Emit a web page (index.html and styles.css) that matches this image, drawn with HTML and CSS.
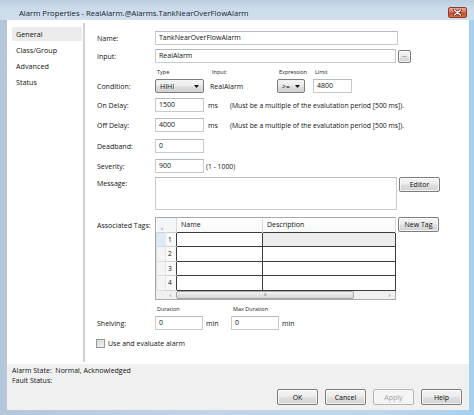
FILE: index.html
```html
<!DOCTYPE html>
<html>
<head>
<meta charset="utf-8">
<title>Alarm Properties</title>
<link rel="stylesheet" href="styles.css">
</head>
<body>
<div class="window">
  <div class="titlebar">
    <span class="title">Alarm Properties - RealAlarm.@Alarms.TankNearOverFlowAlarm</span>
    <span class="close">
      <svg width="9" height="7" viewBox="0 0 9 7">
        <path d="M1.5 1 L7.5 6 M7.5 1 L1.5 6" stroke="#5a1a10" stroke-width="2.6" stroke-linecap="round"/>
        <path d="M1.5 1 L7.5 6 M7.5 1 L1.5 6" stroke="#ffffff" stroke-width="1.4" stroke-linecap="round"/>
      </svg>
    </span>
  </div>

  <div class="client">
    <div class="content">
      <ul class="nav">
        <li class="active">General</li>
        <li>Class/Group</li>
        <li>Advanced</li>
        <li>Status</li>
      </ul>

      <div class="form">
        <div class="row">
          <span class="lbl">Name:</span>
          <div class="box name-box">TankNearOverFlowAlarm</div>
        </div>

        <div class="row row-input">
          <span class="lbl">Input:</span>
          <div class="box input-box">RealAlarm</div>
          <button class="btn browse">...</button>
        </div>

        <div class="row-condition">
          <span class="lbl cond-lbl">Condition:</span>
          <div class="cond-grid">
            <span class="cap">Type</span>
            <span class="cap">Input:</span>
            <span class="cap">Expression</span>
            <span class="cap">Limit</span>
            <div class="combo type-combo"><span>HIHI</span><svg width="5" height="3" viewBox="0 0 5 3"><path d="M0 0 H5 L2.5 3 Z" fill="#111"/></svg></div>
            <span class="plain">RealAlarm</span>
            <div class="combo expr-combo"><span>&gt;=</span><svg width="5" height="3" viewBox="0 0 5 3"><path d="M0 0 H5 L2.5 3 Z" fill="#111"/></svg></div>
            <div class="box limit-box">4800</div>
          </div>
        </div>

        <div class="row row-on">
          <span class="lbl">On Delay:</span>
          <div class="box short">1500</div>
          <span class="unit">ms</span>
          <span class="note">(Must be a multiple of the evalutation period [500 ms]).</span>
        </div>

        <div class="row row-off">
          <span class="lbl">Off Delay:</span>
          <div class="box short">4000</div>
          <span class="unit">ms</span>
          <span class="note">(Must be a multiple of the evalutation period [500 ms]).</span>
        </div>

        <div class="row row-dead">
          <span class="lbl">Deadband:</span>
          <div class="box short">0</div>
        </div>

        <div class="row row-sev">
          <span class="lbl">Severity:</span>
          <div class="box short">900</div>
          <span class="range">(1 - 1000)</span>
        </div>

        <div class="row-top row-msg">
          <span class="lbl msg-lbl">Message:</span>
          <div class="box message"></div>
          <button class="btn side-btn">Editor</button>
        </div>

        <div class="row-top row-tags">
          <span class="lbl tags-lbl">Associated Tags:</span>
          <div class="tags">
            <table class="tag-table">
              <colgroup>
                <col class="c-sel"><col class="c-num"><col class="c-name"><col class="c-desc">
              </colgroup>
              <thead>
                <tr>
                  <th class="corner" colspan="2"><span class="tri"></span></th>
                  <th>Name</th>
                  <th>Description</th>
                </tr>
              </thead>
              <tbody>
                <tr class="current"><td class="sel"></td><td class="num">1</td><td></td><td class="shade"></td></tr>
                <tr><td class="sel"></td><td class="num">2</td><td></td><td></td></tr>
                <tr><td class="sel"></td><td class="num">3</td><td></td><td></td></tr>
                <tr><td class="sel"></td><td class="num">4</td><td></td><td></td></tr>
              </tbody>
            </table>
            <div class="hscroll">
              <span class="arrow">&#8249;</span>
              <div class="track">
                <div class="thumb"><span class="grip">III</span></div>
              </div>
              <span class="arrow">&#8250;</span>
            </div>
          </div>
          <button class="btn side-btn">New Tag</button>
        </div>

        <div class="shelving">
          <span class="lbl shelf-lbl">Shelving:</span>
          <div class="shelf-grid">
            <span class="cap">Duration</span>
            <span></span>
            <span class="cap">Max Duration</span>
            <span></span>
            <div class="box shelf-box">0</div>
            <span class="unit">min</span>
            <div class="box shelf-box">0</div>
            <span class="unit">min</span>
          </div>
        </div>

        <label class="check-row">
          <span class="check"></span>
          <span>Use and evaluate alarm</span>
        </label>
      </div>
    </div>

    <div class="footer">
      <div class="status">Alarm State:&nbsp; Normal, Acknowledged</div>
      <div class="status">Fault Status:</div>
      <div class="actions">
        <button class="btn">OK</button>
        <button class="btn">Cancel</button>
        <button class="btn" disabled>Apply</button>
        <button class="btn">Help</button>
      </div>
    </div>
  </div>
</div>
</body>
</html>
```

FILE: styles.css
```css
* {
  box-sizing: border-box;
}

html, body {
  margin: 0;
  padding: 0;
}

body {
  width: 474px;
  height: 415px;
  overflow: hidden;
  font-family: "Open Sans", "Noto Sans", "DejaVu Sans", sans-serif;
  font-size: 7px;
  color: #111111;
}

/* ---------- window frame ---------- */
.window {
  width: 474px;
  height: 415px;
  display: flex;
  flex-direction: column;
  background: linear-gradient(90deg, #b4c7da 0%, #c2d4e6 45%, #bdd6ec 80%, #a6d0ef 100%);
}

.titlebar {
  height: 20px;
  flex: none;
  display: flex;
  align-items: center;
  padding: 0 7px 0 19px;
  background: linear-gradient(180deg, #bccddd 0%, #cbdbea 40%, #d0dfed 100%);
}

.title {
  font-size: 7.7px;
  color: #152233;
  padding-top: 5px;
}

.close {
  margin-left: auto;
  margin-top: 5px;
  width: 19px;
  height: 11px;
  display: flex;
  align-items: center;
  justify-content: center;
  border: 1px solid #8c3a2c;
  border-radius: 2px;
  background: linear-gradient(180deg, #e9a99b 0%, #d8755f 45%, #c44a2f 55%, #d66a4e 100%);
}

.client {
  flex: 1;
  margin: 0 5px 5px 7px;
  background: #ffffff;
  display: flex;
  flex-direction: column;
}

.content {
  height: 344px;
  flex: none;
  display: flex;
}

/* ---------- left navigation ---------- */
.nav {
  list-style: none;
  margin: 3px 0 2px 0;
  padding: 4px 0 0 5px;
  width: 78px;
  border-right: 2px solid #d2d2d2;
}

.nav li {
  width: 70px;
  height: 14px;
  line-height: 14px;
  padding-left: 4px;
  margin-bottom: 2px;
  font-size: 7.2px;
}

.nav li.active {
  background: #ebebeb;
}

/* ---------- form ---------- */
.form {
  flex: 1;
  padding: 11px 0 0 12px;
  display: flex;
  flex-direction: column;
}

.row {
  display: flex;
  align-items: center;
  height: 14px;
}

.row-top {
  display: flex;
  align-items: flex-start;
}

.lbl {
  width: 58px;
  flex: none;
}

.box {
  height: 14px;
  border: 1px solid #c6cad1;
  border-top-color: #b4b8bf;
  padding: 0 3px;
  line-height: 12px;
  background: #fff;
  white-space: nowrap;
  overflow: hidden;
}

.name-box {
  width: 243px;
}

.row-input {
  margin-top: 4px;
}

.input-box {
  width: 241px;
}

.btn {
  font-family: inherit;
  font-size: 7px;
  color: #111111;
  height: 16px;
  padding: 0;
  border: 1px solid #7d7d7d;
  border-radius: 2px;
  background: linear-gradient(180deg, #f4f4f4 0%, #ececec 45%, #dedede 55%, #d2d2d2 100%);
  box-shadow: inset 0 0 0 1px rgba(255, 255, 255, 0.7);
}

.btn:disabled {
  color: #a3a3a3;
  border-color: #b3b6b9;
  background: #f4f4f4;
  box-shadow: none;
}

.browse {
  width: 13px;
  height: 13px;
  margin-left: 2px;
  font-size: 6px;
  line-height: 6px;
  padding-bottom: 3px;
}

/* condition block: captions above controls */
.row-condition {
  display: flex;
  align-items: flex-end;
  margin-top: 5px;
}

.cond-lbl {
  height: 14px;
  line-height: 15px;
}

.cond-grid {
  display: grid;
  grid-template-columns: 55px 67px 36px 39px;
  grid-template-rows: 11px 14px;
  align-items: center;
}

.cap {
  font-size: 5.5px;
  padding-left: 2px;
  color: #222;
  align-self: start;
}

.combo {
  height: 14px;
  display: flex;
  align-items: center;
  justify-content: space-between;
  padding: 0 4px 0 4px;
  border: 1px solid #7d7d7d;
  border-radius: 2px;
  background: linear-gradient(180deg, #f4f4f4 0%, #ececec 45%, #dedede 55%, #d2d2d2 100%);
}

.type-combo {
  width: 49px;
}

.expr-combo {
  width: 28px;
}

.limit-box {
  width: 39px;
}

.short {
  width: 49px;
}

.row-on {
  margin-top: 5px;
}

.row-off {
  margin-top: 6px;
}

.row-dead {
  margin-top: 7px;
}

.row-sev {
  margin-top: 6px;
}

.unit {
  padding-left: 4px;
  width: 26px;
}

.note {
  font-size: 6.8px;
}

.range {
  padding-left: 2px;
  font-size: 6.8px;
}

.row-msg {
  margin-top: 4px;
}

.msg-lbl {
  padding-top: 2px;
}

.message {
  width: 242px;
  height: 33px;
}

.side-btn {
  width: 41px;
  height: 15px;
  margin-left: 2px;
}

/* ---------- associated tags grid ---------- */
.row-tags {
  margin-top: 7px;
}

.tags-lbl {
  padding-top: 4px;
}

.tags {
  width: 241px;
  height: 83px;
  border: 1px solid #a9a9a9;
  display: flex;
  flex-direction: column;
}

.tag-table {
  border-collapse: collapse;
  table-layout: fixed;
  width: 239px;
}

.c-sel { width: 9px; }
.c-num { width: 11px; }
.c-name { width: 86px; }
.c-desc { width: 133px; }

.tag-table th {
  height: 14px;
  padding: 0 0 0 4px;
  font-weight: normal;
  text-align: left;
  font-size: 7px;
  border-right: 1px solid #dadada;
  background: linear-gradient(180deg, #ffffff 0%, #f7f8f9 100%);
}

.tag-table th.corner {
  position: relative;
  background: #f4f5f6;
}

.tri {
  position: absolute;
  left: 3px;
  bottom: 2px;
  width: 0;
  height: 0;
  border-left: 3px solid transparent;
  border-bottom: 3px solid #c8c8c8;
}

.tag-table td {
  height: 14.5px;
  padding: 0;
  border: 1px solid #3c3c3c;
}

.tag-table td.sel {
  background: #f3f4f5;
  border: 1px solid #dadde0;
  border-right-color: #e6e6e6;
}

.tag-table tr.current td.sel {
  background: #dcebf8;
}

.tag-table td.num {
  padding-left: 2px;
  font-size: 6.6px;
  background: #f8f8f8;
  border-left: none;
  border-top-color: #cfcfcf;
  border-bottom-color: #cfcfcf;
}

.tag-table td.shade {
  background: #ececec;
}

.tag-table tr:first-child td {
  border-top-color: #3c3c3c;
}

.tag-table tr:first-child td.sel,
.tag-table tr:first-child td.num {
  border-top-color: #cfcfcf;
}

.hscroll {
  flex: 1;
  display: flex;
  align-items: center;
  background: #f0f0f0;
  padding-left: 9px;
}

.arrow {
  width: 11px;
  font-size: 6px;
  color: #555;
  text-align: center;
}

.track {
  flex: 1;
  height: 100%;
  display: flex;
  align-items: center;
}

.thumb {
  width: 178px;
  height: 8px;
  border: 1px solid #a6a6a6;
  border-radius: 2px;
  background: linear-gradient(180deg, #f3f3f3 0%, #e2e2e2 50%, #d6d6d6 100%);
  display: flex;
  align-items: center;
  justify-content: center;
}

.grip {
  font-size: 4px;
  color: #777;
  letter-spacing: -0.5px;
}

/* ---------- shelving ---------- */
.shelving {
  display: flex;
  align-items: flex-end;
  margin-top: 5px;
}

.shelf-lbl {
  height: 14px;
  line-height: 15px;
}

.shelf-grid {
  display: grid;
  grid-template-columns: 48px 28px 48px 30px;
  grid-template-rows: 11px 14px;
  align-items: center;
}

.shelf-box {
  width: 48px;
}

.shelf-grid .unit {
  padding-left: 3px;
}

.check-row {
  display: flex;
  align-items: center;
  margin-top: 9px;
  margin-left: -1px;
  gap: 3px;
  font-size: 7px;
}

.check {
  width: 9px;
  height: 9px;
  border: 1px solid #979797;
  background: linear-gradient(135deg, #d9d9d9 0%, #f2f2f2 100%);
}

/* ---------- footer ---------- */
.footer {
  flex: 1;
  background: #f0f0f0;
  padding: 2px 7px 5px 5px;
  display: flex;
  flex-direction: column;
}

.status {
  height: 10px;
  line-height: 10px;
  font-size: 7px;
}

.actions {
  margin-top: auto;
  display: flex;
  justify-content: flex-end;
  gap: 7px;
}

.actions .btn {
  width: 41px;
}
```
